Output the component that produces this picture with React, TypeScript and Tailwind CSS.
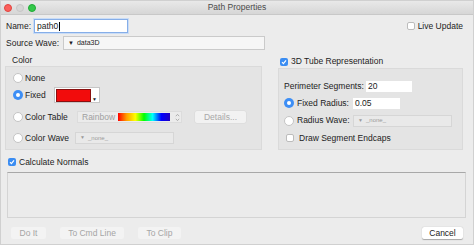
import React from 'react';

const font = { fontFamily: '"Liberation Sans", Arial, sans-serif' };

const Radio: React.FC<{ on?: boolean }> = ({ on }) =>
  on ? (
    <span className="flex h-[10px] w-[10px] shrink-0 items-center justify-center rounded-full bg-[#3d8ef5]">
      <span className="h-[4px] w-[4px] rounded-full bg-white" />
    </span>
  ) : (
    <span className="h-[10px] w-[10px] shrink-0 rounded-full border border-[#c4c4c4] bg-white" />
  );

const Check: React.FC<{ on?: boolean }> = ({ on }) =>
  on ? (
    <span className="flex h-[8px] w-[8px] shrink-0 items-center justify-center rounded-[2px] bg-[#3b8df2]">
      <svg width="6" height="6" viewBox="0 0 6 6">
        <path d="M1 3.2 L2.4 4.6 L5 1.4" stroke="white" strokeWidth="1.2" fill="none" />
      </svg>
    </span>
  ) : (
    <span className="h-[8px] w-[8px] shrink-0 rounded-[2px] border border-[#bcbcbc] bg-white" />
  );

const NonePopup: React.FC<{ w: string }> = ({ w }) => (
  <div className={`flex h-[12px] ${w} items-center gap-[3px] border border-[#d6d6d6] bg-[#e9e9e9] pl-[4px] text-[6px] text-[#9a9a9a]`}>
    <span className="text-[5px]">▼</span>
    <span>_none_</span>
  </div>
);

export default function App() {
  return (
    <div style={font} className="flex h-[245px] w-[474px] flex-col overflow-hidden border border-[#d0d0d0] bg-[#ececec] text-[8.5px] text-[#1c1c1c]">
      {/* title bar */}
      <div className="relative flex h-[14px] shrink-0 items-center border-b border-[#c8c8c8] bg-gradient-to-b from-[#e9e9e9] to-[#d6d6d6]">
        <div className="flex gap-[4px] pl-[3px]">
          <span className="h-[8px] w-[8px] rounded-full border border-[#e0443e] bg-[#fc605c]" />
          <span className="h-[8px] w-[8px] rounded-full border border-[#c6c6c6] bg-[#d6d6d6]" />
          <span className="h-[8px] w-[8px] rounded-full border border-[#1eaa35] bg-[#34c84a]" />
        </div>
        <span className="absolute left-0 right-0 text-center text-[#4a4a4a]">Path Properties</span>
      </div>

      {/* name row */}
      <div className="mt-[4px] flex h-[14px] items-center pl-[5px] pr-[10px]">
        <span>Name:</span>
        <div className="ml-[3px] flex h-[14px] w-[94px] items-center border border-[#86aee8] bg-white pl-[2px] shadow-[0_0_0_1px_#c9dcf6]">
          <span>path0</span>
          <span className="ml-[1px] h-[9px] w-px bg-black" />
        </div>
        <div className="ml-auto flex items-center gap-[3px]">
          <Check />
          <span>Live Update</span>
        </div>
      </div>

      {/* source wave */}
      <div className="mt-[3px] flex h-[14px] items-center pl-[5px]">
        <span className="w-[57px]">Source Wave:</span>
        <div className="flex h-[14px] w-[202px] items-center gap-[3px] border border-[#cacaca] bg-[#f6f6f6] pl-[4px] text-[7px]">
          <span className="text-[6px]">▼</span>
          <span>data3D</span>
        </div>
      </div>

      {/* main columns */}
      <div className="mt-[5px] flex h-[95px] pl-[4px]">
        <div className="flex w-[257px] flex-col">
          <span className="pl-[7px] leading-[11px]">Color</span>
          <div className="flex h-[84px] flex-col border border-[#dadada] bg-[#e4e4e4] pl-[7px]">
            <div className="mt-[5px] flex h-[12px] items-center gap-[2px]">
              <Radio />
              <span>None</span>
            </div>
            <div className="mt-[3px] flex h-[16px] items-center gap-[2px]">
              <Radio on />
              <span className="w-[27px]">Fixed</span>
              <div className="relative flex h-[16px] w-[46px] items-center border border-[#c6c6c6] bg-white pl-[1px]">
                <span className="h-[13px] w-[35px] border border-[#8a1010] bg-[#f20c0c]" />
                <span className="absolute bottom-[0px] right-[2px] text-[5px] leading-[6px]">▼</span>
              </div>
            </div>
            <div className="mt-[7px] flex h-[14px] items-center gap-[2px]">
              <Radio />
              <span className="w-[50px]">Color Table</span>
              <div className="flex h-[12px] w-[105px] items-center border border-[#dcdcdc] bg-[#ebebeb] pl-[4px] text-[#a0a0a0]">
                <span className="w-[36px]">Rainbow</span>
                <span className="h-[8px] w-[52px]" style={{ backgroundImage: 'linear-gradient(to right,#ff0000,#ffa000,#ffff00,#00ff00,#00ffff,#0000ff,#2000c0)' }} />
                <svg className="ml-[5px]" width="5" height="9" viewBox="0 0 5 9">
                  <path d="M0.8 3.2 L2.5 1.4 L4.2 3.2 M0.8 5.8 L2.5 7.6 L4.2 5.8" stroke="#a0a0a0" strokeWidth="0.8" fill="none" />
                </svg>
              </div>
              <div className="ml-[11px] flex h-[12px] w-[51px] items-center justify-center rounded-[2px] bg-[#f2f2f2] text-[#a8a8a8] shadow-[0_0_0_0.5px_#d8d8d8]">
                Details...
              </div>
            </div>
            <div className="mt-[7px] flex h-[14px] items-center gap-[2px]">
              <Radio />
              <span className="w-[48px]">Color Wave</span>
              <NonePopup w="w-[99px]" />
            </div>
          </div>
        </div>

        <div className="ml-[16px] flex w-[185px] flex-col">
          <div className="flex h-[13px] items-center gap-[3px] pl-[2px]">
            <Check on />
            <span>3D Tube Representation</span>
          </div>
          <div className="flex h-[82px] flex-col border border-[#dadada] bg-[#e4e4e4] pl-[5px]">
            <div className="mt-[11px] flex h-[12px] items-center">
              <span className="w-[82px]">Perimeter Segments:</span>
              <div className="flex h-[11px] w-[46px] items-center bg-white pl-[2px]">20</div>
            </div>
            <div className="mt-[5px] flex h-[12px] items-center gap-[3px]">
              <Radio on />
              <span className="w-[53px]">Fixed Radius:</span>
              <div className="flex h-[11px] w-[47px] items-center bg-white pl-[2px]">0.05</div>
            </div>
            <div className="mt-[5px] flex h-[13px] items-center gap-[3px]">
              <Radio />
              <span className="w-[53px]">Radius Wave:</span>
              <NonePopup w="w-[99px]" />
            </div>
            <div className="mt-[5px] flex h-[12px] items-center gap-[3px] pl-[2px]">
              <Check />
              <span className="ml-[2px]">Draw Segment Endcaps</span>
            </div>
          </div>
        </div>
      </div>

      {/* calculate normals */}
      <div className="mt-[6px] flex h-[12px] items-center gap-[3px] pl-[7px]">
        <Check on />
        <span>Calculate Normals</span>
      </div>

      {/* command text area */}
      <div className="ml-[6px] mt-[4px] h-[46px] w-[459px] border border-[#d4d4d4] border-t-[#a8a8a8] bg-[#ebebeb]" />

      {/* buttons */}
      <div className="mt-[9px] flex h-[12px] items-center pl-[10px] pr-[10px] text-[#a5a5a5]">
        <div className="flex h-[12px] w-[35px] items-center justify-center rounded-[2px] bg-[#f3f3f3]">Do It</div>
        <div className="ml-[14px] flex h-[12px] w-[64px] items-center justify-center rounded-[2px] bg-[#f3f3f3]">To Cmd Line</div>
        <div className="ml-[14px] flex h-[12px] w-[43px] items-center justify-center rounded-[2px] bg-[#f3f3f3]">To Clip</div>
        <div className="ml-auto flex h-[12px] w-[41px] items-center justify-center rounded-[2px] bg-white text-[#222] shadow-[0_0.5px_1px_rgba(0,0,0,0.3)]">Cancel</div>
      </div>
    </div>
  );
}
